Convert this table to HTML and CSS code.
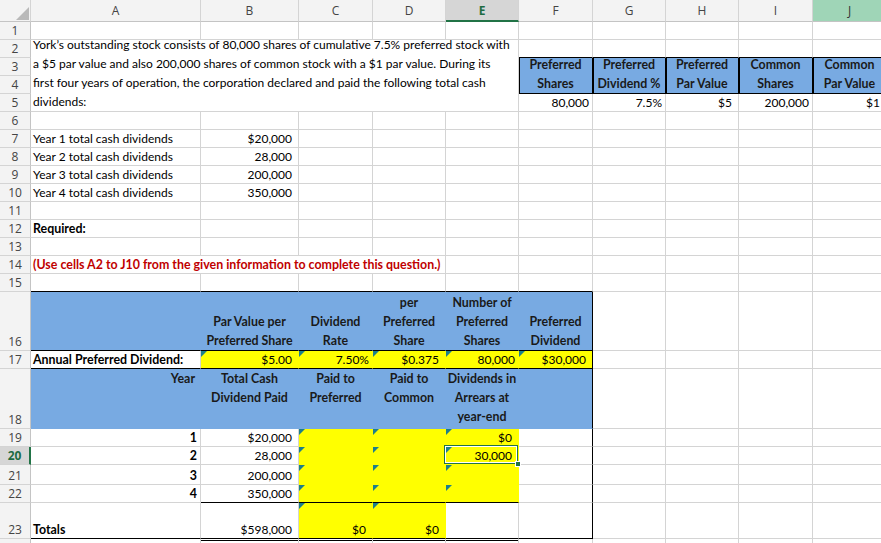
FILE: index.html
```html
<!DOCTYPE html>
<html>
<head>
<meta charset="utf-8">
<link rel="stylesheet" href="styles.css">
</head>
<body>
<div class="sheet">
  <!-- column headers -->
  <div class="ch corner"><i class="tri"></i></div>
  <div class="ch">A</div><div class="ch">B</div><div class="ch">C</div><div class="ch">D</div>
  <div class="ch cur">E</div><div class="ch">F</div><div class="ch">G</div><div class="ch">H</div>
  <div class="ch">I</div><div class="ch hov">J</div>

  <!-- row 1 -->
  <div class="rh">1</div>
  <div class="c"></div><div class="c"></div><div class="c"></div><div class="c"></div><div class="c"></div>
  <div class="c"></div><div class="c"></div><div class="c"></div><div class="c"></div><div class="c"></div>

  <!-- row 2 -->
  <div class="rh">2</div>
  <div class="c para"><span>York’s outstanding stock consists of 80,000 shares of cumulative 7.5% preferred stock with<br>a $5 par value and also 200,000 shares of common stock with a $1 par value. During its<br>first four years of operation, the corporation declared and paid the following total cash<br>dividends:</span></div>
  <div class="c bb"></div><div class="c bb"></div><div class="c bb"></div><div class="c bb"></div><div class="c bb"></div>

  <!-- row 3 -->
  <div class="rh">3</div>
  <div class="c blue bb rb hd2 fl"><span>Preferred<br>Shares</span></div>
  <div class="c blue bb rb hd2 gl"><span>Preferred<br>Dividend %</span></div>
  <div class="c blue bb rb hd2 gl"><span>Preferred<br>Par Value</span></div>
  <div class="c blue bb rb hd2 gl"><span>Common<br>Shares</span></div>
  <div class="c blue bb hd2 gl"><span>Common<br>Par Value</span></div>

  <!-- row 4 -->
  <div class="rh">4</div>

  <!-- row 5 -->
  <div class="rh">5</div>
  <div class="c r">80,000</div><div class="c r">7.5%</div><div class="c r pr">$5</div><div class="c r">200,000</div><div class="c r pr">$1</div>

  <!-- row 6 -->
  <div class="rh">6</div>
  <div class="c"></div><div class="c"></div><div class="c"></div><div class="c"></div><div class="c"></div>
  <div class="c"></div><div class="c"></div><div class="c"></div><div class="c"></div><div class="c"></div>

  <!-- rows 7-10 -->
  <div class="rh">7</div>
  <div class="c">Year 1 total cash dividends</div><div class="c r pr">$20,000</div>
  <div class="c"></div><div class="c"></div><div class="c"></div><div class="c"></div><div class="c"></div><div class="c"></div><div class="c"></div><div class="c"></div>
  <div class="rh">8</div>
  <div class="c">Year 2 total cash dividends</div><div class="c r pr">28,000</div>
  <div class="c"></div><div class="c"></div><div class="c"></div><div class="c"></div><div class="c"></div><div class="c"></div><div class="c"></div><div class="c"></div>
  <div class="rh">9</div>
  <div class="c">Year 3 total cash dividends</div><div class="c r pr">200,000</div>
  <div class="c"></div><div class="c"></div><div class="c"></div><div class="c"></div><div class="c"></div><div class="c"></div><div class="c"></div><div class="c"></div>
  <div class="rh">10</div>
  <div class="c">Year 4 total cash dividends</div><div class="c r pr">350,000</div>
  <div class="c"></div><div class="c"></div><div class="c"></div><div class="c"></div><div class="c"></div><div class="c"></div><div class="c"></div><div class="c"></div>

  <!-- row 11 -->
  <div class="rh">11</div>
  <div class="c"></div><div class="c"></div><div class="c"></div><div class="c"></div><div class="c"></div>
  <div class="c"></div><div class="c"></div><div class="c"></div><div class="c"></div><div class="c"></div>

  <!-- row 12 -->
  <div class="rh">12</div>
  <div class="c b">Required:</div>
  <div class="c"></div><div class="c"></div><div class="c"></div><div class="c"></div>
  <div class="c"></div><div class="c"></div><div class="c"></div><div class="c"></div><div class="c"></div>

  <!-- row 13 -->
  <div class="rh">13</div>
  <div class="c"></div><div class="c"></div><div class="c"></div><div class="c"></div><div class="c"></div>
  <div class="c"></div><div class="c"></div><div class="c"></div><div class="c"></div><div class="c"></div>

  <!-- row 14 -->
  <div class="rh">14</div>
  <div class="c b red span4">(Use cells A2 to J10 from the given information to complete this question.)</div>
  <div class="c"></div><div class="c"></div><div class="c"></div><div class="c"></div><div class="c"></div><div class="c"></div>

  <!-- row 15 -->
  <div class="rh">15</div>
  <div class="c bb"></div><div class="c bb"></div><div class="c bb"></div><div class="c bb"></div><div class="c bb"></div><div class="c bb"></div>
  <div class="c"></div><div class="c"></div><div class="c"></div><div class="c"></div>

  <!-- row 16 -->
  <div class="rh">16</div>
  <div class="c blue bb"></div>
  <div class="c blue bb hd"><span>Par Value per<br>Preferred Share</span></div>
  <div class="c blue bb hd"><span>Dividend<br>Rate</span></div>
  <div class="c blue bb hd"><span>per<br>Preferred<br>Share</span></div>
  <div class="c blue bb hd"><span>Number of<br>Preferred<br>Shares</span></div>
  <div class="c blue bb rb hd"><span>Preferred<br>Dividend</span></div>
  <div class="c"></div><div class="c"></div><div class="c"></div><div class="c"></div>

  <!-- row 17 -->
  <div class="rh">17</div>
  <div class="c b bb">Annual Preferred Dividend:</div>
  <div class="c y t r pr bb">$5.00</div>
  <div class="c y t r bb">7.50%</div>
  <div class="c y t r pr bb">$0.375</div>
  <div class="c y t r bb">80,000</div>
  <div class="c y t r pr bb rb">$30,000</div>
  <div class="c"></div><div class="c"></div><div class="c"></div><div class="c"></div>

  <!-- row 18 -->
  <div class="rh">18</div>
  <div class="c blue top r b yr">Year</div>
  <div class="c blue hdt"><span>Total Cash<br>Dividend Paid</span></div>
  <div class="c blue hdt"><span>Paid to<br>Preferred</span></div>
  <div class="c blue hdt"><span>Paid to<br>Common</span></div>
  <div class="c blue hdt"><span>Dividends in<br>Arrears at<br>year-end</span></div>
  <div class="c blue rb"></div>
  <div class="c"></div><div class="c"></div><div class="c"></div><div class="c"></div>

  <!-- row 19 -->
  <div class="rh">19</div>
  <div class="c r b">1</div><div class="c r pr">$20,000</div>
  <div class="c y t"></div><div class="c y t"></div><div class="c y t r pr">$0</div>
  <div class="c rb"></div>
  <div class="c"></div><div class="c"></div><div class="c"></div><div class="c"></div>

  <!-- row 20 -->
  <div class="rh rcur">20</div>
  <div class="c r b">2</div><div class="c r pr">28,000</div>
  <div class="c y t"></div><div class="c y t"></div><div class="c y t r pr sel">30,000<i class="handle"></i></div>
  <div class="c rb"></div>
  <div class="c"></div><div class="c"></div><div class="c"></div><div class="c"></div>

  <!-- row 21 -->
  <div class="rh">21</div>
  <div class="c r b">3</div><div class="c r pr">200,000</div>
  <div class="c y t"></div><div class="c y t"></div><div class="c y t"></div>
  <div class="c rb"></div>
  <div class="c"></div><div class="c"></div><div class="c"></div><div class="c"></div>

  <!-- row 22 -->
  <div class="rh">22</div>
  <div class="c r b">4</div><div class="c r pr bb">350,000</div>
  <div class="c y t bb"></div><div class="c y t bb"></div><div class="c y t bb"></div>
  <div class="c rb"></div>
  <div class="c"></div><div class="c"></div><div class="c"></div><div class="c"></div>

  <!-- row 23 -->
  <div class="rh">23</div>
  <div class="c b bb">Totals</div><div class="c r pr bb">$598,000</div>
  <div class="c y t r pr bb">$0</div><div class="c y t r pr bb">$0</div>
  <div class="c bb"></div><div class="c bb rb"></div>
  <div class="c"></div><div class="c"></div><div class="c"></div><div class="c"></div>

  <!-- row 24 -->
  <div class="rh"></div>
  <div class="c"></div><div class="c dbl"></div><div class="c dbl"></div><div class="c dbl"></div><div class="c dbl"></div>
  <div class="c"></div><div class="c"></div><div class="c"></div><div class="c"></div><div class="c"></div>
</div>
</body>
</html>
```

FILE: styles.css
```css
* { box-sizing: border-box; }
html, body { margin: 0; padding: 0; background: #fff; overflow: hidden; }
body { width: 881px; height: 543px; }

.sheet {
  display: grid;
  grid-template-columns: 31px 170px 98px 74px 73px 73px 74px 73px 73px 74px 74px;
  grid-template-rows: 22px repeat(15, 18px) 59px 18px 60px 18px 18px 20px 18px 36px 18px;
  font-family: Lato, "Liberation Sans", sans-serif;
  font-size: 12px;
  color: #000;
  width: 885px;
}

/* headers */
.ch, .rh {
  background: #f3f3f3;
  font-family: "Open Sans", "Noto Sans", sans-serif;
  font-size: 12px;
  color: #444;
  display: flex;
  justify-content: center;
}
.ch { align-items: center; border-right: 1px solid #d4d4d4; border-bottom: 1px solid #c4c4c4; }
.rh { align-items: flex-end; line-height: 17px; border-right: 1px solid #c4c4c4; border-bottom: 1px solid #d4d4d4; }
.corner { align-items: flex-end; justify-content: flex-end; padding: 0 1px 1px 0; }
.tri {
  display: block; width: 0; height: 0;
  border-left: 13px solid transparent;
  border-bottom: 13px solid #b9b9b9;
}
.ch.cur { background: #d6d6d6; color: #1e6b41; font-weight: 700; border-bottom: 2px solid #217346; }
.ch.hov { background: #9fd5b7; color: #333; }
.rh.rcur { background: #d6d6d6; color: #1e6b41; font-weight: 700; border-right: 2px solid #217346; }

/* cells */
.c {
  border-right: 1px solid #d4d4d4;
  border-bottom: 1px solid #d4d4d4;
  display: flex;
  align-items: flex-end;
  padding: 0 3px 0 2px;
  line-height: 17px;
  white-space: nowrap;
  min-width: 0;
}
.r { justify-content: flex-end; }
.pr { padding-right: 6px; }
.b { font-weight: 700; font-size: 12.4px; }
.red { color: #c00000; }
.span4 { grid-column: span 4; }

.para {
  grid-column: span 5;
  grid-row: span 4;
  line-height: 19px;
}

.blue { background: #78aae2; border-color: #78aae2; color: #1a1a1a; }
.y { background: #ffff00; border-color: #ffff00; position: relative; }
.bb { border-bottom-color: #000; }
.rb { border-right-color: #000; }

.hd2 {
  grid-row: span 2;
  font-weight: 700;
  font-size: 12.4px;
  justify-content: center;
  text-align: center;
  line-height: 19px;
  padding: 0 2px;
}
.fl { box-shadow: inset 1px 0 0 #000; }
.gl { box-shadow: inset 1px 0 0 #000; }

.hd {
  font-weight: 700;
  font-size: 12.4px;
  justify-content: center;
  text-align: center;
  line-height: 19px;
  padding: 0 2px;
}
.hdt {
  font-weight: 700;
  font-size: 12.4px;
  justify-content: center;
  align-items: flex-start;
  text-align: center;
  line-height: 19px;
  padding: 0 2px;
}
.top { align-items: flex-start; line-height: 19px; }
.yr { padding-right: 5px; }

/* error indicators */
.t::before {
  content: "";
  position: absolute;
  left: 0; top: 0;
  border-top: 6px solid #1d7f8c;
  border-right: 6px solid transparent;
}

/* active cell */
.sel { z-index: 2; }
.sel::after {
  content: "";
  position: absolute;
  left: -2px; top: -2px; right: 0; bottom: 0;
  border: 1px solid #217346;
  box-shadow: inset 0 0 0 1px #fff;
}
.handle {
  position: absolute;
  right: -3px; bottom: -3px;
  width: 6px; height: 6px;
  background: #217346;
  border: 1px solid #fff;
  z-index: 3;
}

.dbl {
  background: linear-gradient(#000, #000) 0 1px / 100% 1px no-repeat;
}
```
